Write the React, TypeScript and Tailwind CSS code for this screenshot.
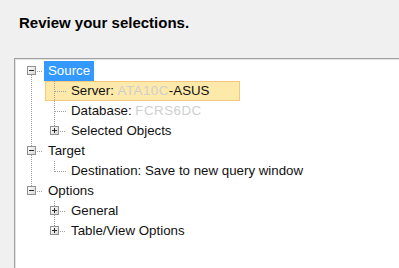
import React from 'react'

type GuideProps = {
  up?: boolean
  down?: boolean
  right?: boolean
  box?: '+' | '-'
}

// one 23px indent column of the tree, dotted connector lines + optional expander
function Guide({ up, down, right, box }: GuideProps) {
  const dot = { stroke: '#a0a0a0', strokeWidth: 1, strokeDasharray: '1 1' }
  return (
    <svg width="23" height="20" className="block shrink-0">
      {up && <line x1="11.5" y1="0" x2="11.5" y2={box ? 5 : 11} {...dot} />}
      {down && <line x1="11.5" y1={box ? 14 : 10} x2="11.5" y2="20" {...dot} />}
      {right && <line x1={box ? 17 : 12} y1="10.5" x2="23" y2="10.5" {...dot} />}
      {box && (
        <g>
          <defs>
            <linearGradient id="exp" x1="0" y1="0" x2="1" y2="1">
              <stop offset="0" stopColor="#ffffff" />
              <stop offset="1" stopColor="#d6d6d6" />
            </linearGradient>
          </defs>
          <rect x="7.5" y="5.5" width="8" height="8" fill="url(#exp)" stroke="#919191" />
          <line x1="9" y1="9.5" x2="14" y2="9.5" stroke="#2b2b2b" />
          {box === '+' && <line x1="11.5" y1="7" x2="11.5" y2="12" stroke="#2b2b2b" />}
        </g>
      )}
    </svg>
  )
}

function Row({
  guides,
  children,
  selected,
  hot,
}: {
  guides: GuideProps[]
  children: React.ReactNode
  selected?: boolean
  hot?: boolean
}) {
  const first = guides.slice(0, -1)
  const last = guides[guides.length - 1]
  return (
    <div className="flex h-[20px] items-stretch">
      {first.map((g, i) => (
        <Guide key={i} {...g} />
      ))}
      <div className="relative flex">
        {hot && (
          <span className="absolute left-[2px] top-0 h-[20px] w-[195px] border border-[#f3c77c] bg-[#fde9a9]" />
        )}
        <div className="relative flex">
          <Guide {...last} />
          <span
            className={`ml-px px-[4px] whitespace-nowrap leading-[20px] ${
              selected ? 'bg-[#3399ff] text-white' : 'text-[#111]'
            }`}
          >
            {children}
          </span>
        </div>
      </div>
    </div>
  )
}

const hidden = 'text-[#cfcfcf] tracking-[0.5px]'

export default function App() {
  return (
    <main
      className="h-[268px] w-[399px] overflow-hidden bg-[#f0f0f0] pl-[14px] pt-[14px]"
      style={{ fontFamily: '"Liberation Sans", Arial, sans-serif' }}
    >
      <h1 className="ml-[5px] text-[15px] font-bold leading-[18px] text-black">
        Review your selections.
      </h1>

      <div className="mt-[26px] h-[240px] border-l border-t border-[#a0a0a0] bg-white pl-[5px] pt-[2px] text-[13.3px] shadow-[inset_1px_1px_0_#e3e3e3]">
        <Row guides={[{ down: true, right: true, box: '-' }]} selected>
          Source
        </Row>
        <Row guides={[{ up: true, down: true }, { up: true, down: true, right: true }]} hot>
          Server: <span className={hidden}>ATA10C</span>-ASUS
        </Row>
        <Row guides={[{ up: true, down: true }, { up: true, down: true, right: true }]}>
          Database: <span className={hidden}>FCRS6DC</span>
        </Row>
        <Row guides={[{ up: true, down: true }, { up: true, right: true, box: '+' }]}>
          Selected Objects
        </Row>
        <Row guides={[{ up: true, down: true, right: true, box: '-' }]}>Target</Row>
        <Row guides={[{ up: true, down: true }, { up: true, right: true }]}>
          Destination: Save to new query window
        </Row>
        <Row guides={[{ up: true, right: true, box: '-' }]}>Options</Row>
        <Row guides={[{}, { up: true, down: true, right: true, box: '+' }]}>General</Row>
        <Row guides={[{}, { up: true, right: true, box: '+' }]}>Table/View Options</Row>
      </div>
    </main>
  )
}
